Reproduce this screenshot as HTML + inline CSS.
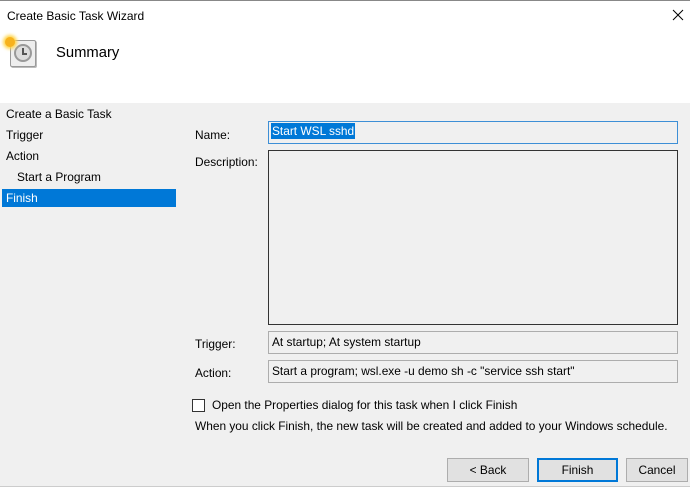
<!DOCTYPE html>
<html><head><meta charset="utf-8"><style>
*{box-sizing:border-box;margin:0;padding:0}
body{width:690px;height:487px;background:#f0f0f0;font-family:"Liberation Sans",sans-serif;font-size:11.9px;color:#000;position:relative;overflow:hidden}
.a{position:absolute}
.box{position:absolute;border:1px solid #adadad;background:#f0f0f0;padding:3px 3px;white-space:nowrap}
.btn{position:absolute;height:24px;border:1px solid #adadad;background:#e1e1e1;text-align:center;line-height:22px}
</style></head><body>
<div class="a" style="left:0;top:0;width:690px;height:103px;background:#fff"></div>
<div class="a" style="left:0;top:0;width:690px;height:1px;background:#888"></div>
<div class="a" style="left:7px;top:9px;font-size:12px">Create Basic Task Wizard</div>
<svg class="a" style="left:672px;top:9px" width="12" height="12"><path d="M1 1L11 11M11 1L1 11" stroke="#000" stroke-width="1"/></svg>
<!-- icon -->
<div class="a" style="left:10px;top:40px;width:26px;height:27px;background:#eee;border:1px solid #999;border-radius:2px;box-shadow:1px 1px 0 #bbb"></div>
<div class="a" style="left:14px;top:44px;width:18px;height:18px;border-radius:50%;background:#ddd;border:2px solid #999"></div>
<div class="a" style="left:22px;top:48px;width:2px;height:6px;background:#555"></div>
<div class="a" style="left:22px;top:53px;width:5px;height:2px;background:#555"></div>
<div class="a" style="left:5px;top:37px;width:10px;height:10px;border-radius:50%;background:#f7b21c;box-shadow:0 0 3px 2px #ffd54a"></div>
<div class="a" style="left:56px;top:45px;font-size:14.8px">Summary</div>
<!-- nav -->
<div class="a" style="left:6px;top:107px">Create a Basic Task</div>
<div class="a" style="left:6px;top:128px">Trigger</div>
<div class="a" style="left:6px;top:149px">Action</div>
<div class="a" style="left:17px;top:170px">Start a Program</div>
<div class="a" style="left:2px;top:189px;width:174px;height:18px;background:#0078d7;color:#fff;padding:2px 4px">Finish</div>
<!-- form -->
<div class="a" style="left:195px;top:128px">Name:</div>
<div class="box" style="left:268px;top:121px;width:410px;height:23px;background:#f0f0f0;border-color:#3d8fd6;padding:2px 2px"><span style="background:#0078d7;color:#fff;padding:1px 1px">Start WSL sshd</span></div>
<div class="a" style="left:195px;top:155px">Description:</div>
<div class="a" style="left:268px;top:150px;width:410px;height:175px;border:1px solid #333;background:#f0f0f0"></div>
<div class="a" style="left:195px;top:337px">Trigger:</div>
<div class="box" style="left:268px;top:331px;width:410px;height:23px">At startup; At system startup</div>
<div class="a" style="left:195px;top:366px">Action:</div>
<div class="box" style="left:268px;top:360px;width:410px;height:23px">Start a program; wsl.exe -u demo sh -c "service ssh start"</div>
<div class="a" style="left:192px;top:399px;width:13px;height:13px;border:1px solid #333;background:#fff"></div>
<div class="a" style="left:212px;top:398px">Open the Properties dialog for this task when I click Finish</div>
<div class="a" style="left:195px;top:419px">When you click Finish, the new task will be created and added to your Windows schedule.</div>
<div class="btn" style="left:447px;top:458px;width:82px">&lt; Back</div>
<div class="btn" style="left:537px;top:458px;width:81px;border:2px solid #0078d7;line-height:20px">Finish</div>
<div class="btn" style="left:626px;top:458px;width:62px">Cancel</div>
<div class="a" style="left:0;top:486px;width:690px;height:1px;background:#ccc"></div>
</body></html>
